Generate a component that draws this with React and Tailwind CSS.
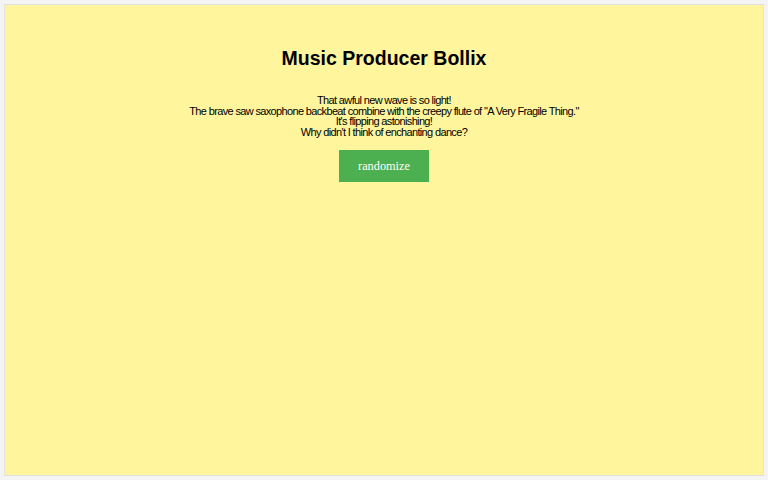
export default function App() {
  return (
    <div className="min-h-screen bg-[#f4f4f4] p-1 font-['Liberation_Sans',Arial,sans-serif]">
      <div className="h-[472px] border border-[#e2e2e2] bg-[#fff59d] text-center text-black">
        <h1 className="pt-[31px] text-[19.5px] font-bold leading-[44px]">Music Producer Bollix</h1>
        <div className="mt-[15px] text-[11px] leading-[10.7px] tracking-[-0.65px]">
          <p>That awful new wave is so light!</p>
          <p>The brave saw saxophone backbeat combine with the creepy flute of "A Very Fragile Thing."</p>
          <p>It's flipping astonishing!</p>
          <p>Why didn't I think of enchanting dance?</p>
        </div>
        <button className="mt-[12px] h-[32px] w-[90px] bg-[#4caf50] font-['Liberation_Serif',serif] text-[12.3px] text-white">
          randomize
        </button>
      </div>
    </div>
  );
}
